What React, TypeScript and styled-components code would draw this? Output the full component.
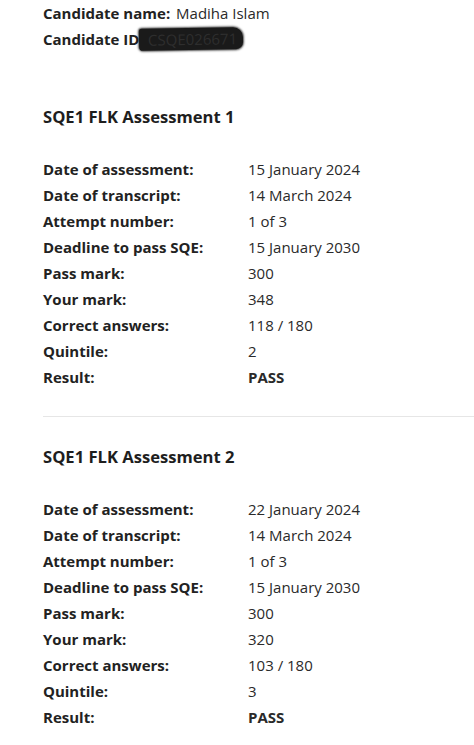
import React from "react";
import styled, { createGlobalStyle } from "styled-components";

const Global = createGlobalStyle`
  html, body { margin: 0; padding: 0; background: #fff; }
  body { font-family: "Open Sans", "Noto Sans", sans-serif; color: #222; -webkit-font-smoothing: antialiased; }
`;

const Page = styled.div`
  padding: 0 0 0 43px;
  overflow: hidden;
`;

const CandidateLine = styled.div`
  font-size: 15px;
  line-height: 26px;
  white-space: nowrap;
`;

const Label = styled.span`
  font-weight: 700;
  color: #222;
`;

const Plain = styled.span`
  font-weight: 400;
  color: #2a2a2a;
  margin-left: 2px;
`;

const Redacted = styled.span`
  display: inline-block;
  background: #1a1a1a;
  color: #2e2e2e;
  padding: 0 6px 0 9px;
  margin-left: -9px;
  line-height: 22px;
  border-radius: 3px 10px 7px 4px;
  box-shadow: 0 0 2px 1px rgba(25, 25, 25, 0.75);
  transform: rotate(-1deg);
`;

const Section = styled.section<{ $top: number }>`
  margin-top: ${(p) => p.$top}px;
`;

const Heading = styled.h2`
  margin: 0 0 26px;
  font-size: 16.6px;
  line-height: 26px;
  font-weight: 700;
  color: #1e1e1e;
`;

const Grid = styled.div`
  display: grid;
  grid-template-columns: 205px 1fr;
  font-size: 15px;
  line-height: 26px;
`;

const Key = styled.div`
  font-weight: 700;
  color: #222;
  white-space: nowrap;
`;

const Value = styled.div<{ $bold?: boolean }>`
  font-weight: ${(p) => (p.$bold ? 700 : 400)};
  color: #2a2a2a;
  white-space: nowrap;
`;

const Divider = styled.hr`
  border: 0;
  height: 1px;
  background: #e6e6e6;
  margin: 26px 0 0;
`;

type Row = [string, string, boolean?];

const a1: Row[] = [
  ["Date of assessment:", "15 January 2024"],
  ["Date of transcript:", "14 March 2024"],
  ["Attempt number:", "1 of 3"],
  ["Deadline to pass SQE:", "15 January 2030"],
  ["Pass mark:", "300"],
  ["Your mark:", "348"],
  ["Correct answers:", "118 / 180"],
  ["Quintile:", "2"],
  ["Result:", "PASS", true],
];

const a2: Row[] = [
  ["Date of assessment:", "22 January 2024"],
  ["Date of transcript:", "14 March 2024"],
  ["Attempt number:", "1 of 3"],
  ["Deadline to pass SQE:", "15 January 2030"],
  ["Pass mark:", "300"],
  ["Your mark:", "320"],
  ["Correct answers:", "103 / 180"],
  ["Quintile:", "3"],
  ["Result:", "PASS", true],
];

function Assessment({ title, rows, top }: { title: string; rows: Row[]; top: number }) {
  return (
    <Section $top={top}>
      <Heading>{title}</Heading>
      <Grid>
        {rows.map(([k, v, b]) => (
          <React.Fragment key={k}>
            <Key>{k}</Key>
            <Value $bold={b}>{v}</Value>
          </React.Fragment>
        ))}
      </Grid>
    </Section>
  );
}

export default function App() {
  return (
    <Page>
      <Global />
      <CandidateLine>
        <Label>Candidate name:</Label> <Plain>Madiha Islam</Plain>
      </CandidateLine>
      <CandidateLine>
        <Label>Candidate ID:</Label> <Redacted>CSQE026671</Redacted>
      </CandidateLine>
      <Assessment title="SQE1 FLK Assessment 1" rows={a1} top={52} />
      <Divider />
      <Assessment title="SQE1 FLK Assessment 2" rows={a2} top={27} />
    </Page>
  );
}
